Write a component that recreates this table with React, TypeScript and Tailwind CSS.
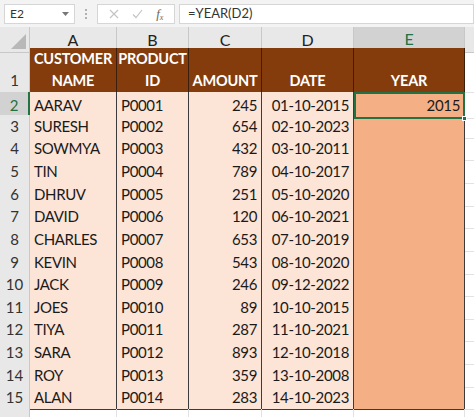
import type { ReactNode } from 'react';

interface Row {
    name: string;
    id: string;
    amount: number;
    date: string;
}

const rows: Row[] = [
    { name: 'AARAV', id: 'P0001', amount: 245, date: '01-10-2015' },
    { name: 'SURESH', id: 'P0002', amount: 654, date: '02-10-2023' },
    { name: 'SOWMYA', id: 'P0003', amount: 432, date: '03-10-2011' },
    { name: 'TIN', id: 'P0004', amount: 789, date: '04-10-2017' },
    { name: 'DHRUV', id: 'P0005', amount: 251, date: '05-10-2020' },
    { name: 'DAVID', id: 'P0006', amount: 120, date: '06-10-2021' },
    { name: 'CHARLES', id: 'P0007', amount: 653, date: '07-10-2019' },
    { name: 'KEVIN', id: 'P0008', amount: 543, date: '08-10-2020' },
    { name: 'JACK', id: 'P0009', amount: 246, date: '09-12-2022' },
    { name: 'JOES', id: 'P0010', amount: 89, date: '10-10-2015' },
    { name: 'TIYA', id: 'P0011', amount: 287, date: '11-10-2021' },
    { name: 'SARA', id: 'P0012', amount: 893, date: '12-10-2018' },
    { name: 'ROY', id: 'P0013', amount: 359, date: '13-10-2008' },
    { name: 'ALAN', id: 'P0014', amount: 283, date: '14-10-2023' },
];

// rows that are one pixel shorter, so 14 rows fill 317px
const shortRows = [1, 4, 7, 9, 12];

const cols = 'grid grid-cols-[30px_87px_72px_73px_92px_111px_1fr]';

const FormulaBar = () => (
    <div className="h-[27px] bg-[#f3f3f3] flex items-center text-[12px] text-[#333]">
        <div className="ml-[4px] w-[71px] h-[20px] bg-white border border-[#d6d6d6] flex items-center justify-between px-[5px]">
            <span>E2</span>
            <svg width="7" height="4" viewBox="0 0 7 4"><path d="M0 0h7L3.5 4z" fill="#777" /></svg>
        </div>
        <div className="w-[22px] flex justify-center">
            <div className="flex flex-col gap-[2px]">
                <span className="w-[2px] h-[2px] bg-[#b0b0b0]" />
                <span className="w-[2px] h-[2px] bg-[#b0b0b0]" />
                <span className="w-[2px] h-[2px] bg-[#b0b0b0]" />
            </div>
        </div>
        <div className="w-[78px] h-[20px] bg-white border border-[#d6d6d6] flex items-center justify-around px-[4px]">
            <svg width="10" height="10" viewBox="0 0 10 10"><path d="M1 1l8 8M9 1L1 9" stroke="#c4c4c4" strokeWidth="1.2" /></svg>
            <svg width="11" height="10" viewBox="0 0 11 10"><path d="M1 5.5l3 3L10 1" stroke="#c4c4c4" strokeWidth="1.2" fill="none" /></svg>
            <span className="italic font-['Liberation_Serif',serif] text-[13px] text-[#666]">f<sub className="text-[8px]">x</sub></span>
        </div>
        <div className="ml-[4px] flex-1 h-[20px] bg-white border border-[#d6d6d6] flex items-center pl-[8px] text-[13px]">
            =YEAR(D2)
        </div>
    </div>
);

const ColHead = ({ children, active }: { children: ReactNode; active?: boolean }) => (
    <div
        className={`flex items-center justify-center border-r border-[#c8c8c8] text-[16px] ${
            active ? 'bg-[#d2d2d2] text-[#217346] border-b-2 border-b-[#217346]' : 'bg-[#e8e8e8] text-[#222] border-b border-b-[#c8c8c8]'
        }`}
    >
        {children}
    </div>
);

const RowHead = ({ n, active }: { n?: number; active?: boolean }) => (
    <div
        className={`flex items-center justify-center text-[15px] border-b border-[#d0d0d0] ${
            active ? 'bg-[#d2d2d2] text-[#217346] border-r-2 border-r-[#217346]' : 'bg-[#e8e8e8] text-[#333] border-r border-r-[#c8c8c8]'
        }`}
    >
        {n}
    </div>
);

const Cell = ({ children, right, bg = 'bg-[#fce4d6]' }: { children?: ReactNode; right?: boolean; bg?: string }) => (
    <div
        className={`${bg} border-r border-b border-[#3b3b3b] flex items-center px-[4px] text-[15px] tracking-[-0.35px] text-[#1a1a1a] ${
            right ? 'justify-end' : ''
        }`}
    >
        {children}
    </div>
);

const HeadCell = ({ lines }: { lines: string[] }) => (
    <div className="bg-[#843c0c] border-r border-b border-[#3b2010] flex flex-col items-center justify-end text-white font-bold text-[14.5px] tracking-[-0.2px] leading-[22px]">
        {lines.map((l) => (
            <span key={l}>{l}</span>
        ))}
    </div>
);

export default function App() {
    return (
        <div className="w-[474px] h-[417px] overflow-hidden bg-white font-['Lato',sans-serif]">
            <FormulaBar />

            {/* column letters */}
            <div className={`${cols} h-[21px]`}>
                <div className="bg-[#e8e8e8] border-r border-b border-[#c8c8c8] relative">
                    <svg className="absolute right-[3px] bottom-[3px]" width="15" height="15" viewBox="0 0 15 15"><path d="M15 0v15H0z" fill="#b8b8b8" /></svg>
                </div>
                <ColHead>A</ColHead>
                <ColHead>B</ColHead>
                <ColHead>C</ColHead>
                <ColHead>D</ColHead>
                <ColHead active>E</ColHead>
                <div className="bg-[#e8e8e8] border-b border-[#c8c8c8]" />
            </div>

            {/* header row */}
            <div className={`${cols} h-[44px]`}>
                <div className="bg-[#e8e8e8] border-r border-b border-[#c8c8c8] flex items-end justify-center pb-[1px] text-[15px] text-[#333]">1</div>
                <HeadCell lines={['CUSTOMER', 'NAME']} />
                <HeadCell lines={['PRODUCT', 'ID']} />
                <HeadCell lines={['AMOUNT']} />
                <HeadCell lines={['DATE']} />
                <HeadCell lines={['YEAR']} />
                <div className="border-b border-[#e2e2e2]" />
            </div>

            {rows.map((r, i) => (
                <div key={r.id} className={`${cols} ${shortRows.includes(i) ? 'h-[22px]' : 'h-[23px]'}`}>
                    <RowHead n={i + 2} active={i === 0} />
                    <Cell>{r.name}</Cell>
                    <Cell>{r.id}</Cell>
                    <Cell right>{r.amount}</Cell>
                    <Cell right>{r.date}</Cell>
                    {i === 0 ? (
                        <div className="bg-[#f4b084] border-2 border-[#217346] flex items-center justify-end px-[3px] text-[15px] tracking-[-0.35px] text-[#1a1a1a] relative">
                            2015
                            <span className="absolute -right-[4px] -bottom-[4px] w-[5px] h-[5px] bg-[#217346] border border-white" />
                        </div>
                    ) : (
                        <Cell bg="bg-[#f4b084]" />
                    )}
                    <div className="border-b border-[#e2e2e2]" />
                </div>
            ))}

            <div className={`${cols} h-[22px]`}>
                <RowHead />
                <div className="border-r border-[#e2e2e2]" />
                <div className="border-r border-[#e2e2e2]" />
                <div className="border-r border-[#e2e2e2]" />
                <div className="border-r border-[#e2e2e2]" />
                <div className="border-r border-[#e2e2e2]" />
                <div />
            </div>
        </div>
    );
}
